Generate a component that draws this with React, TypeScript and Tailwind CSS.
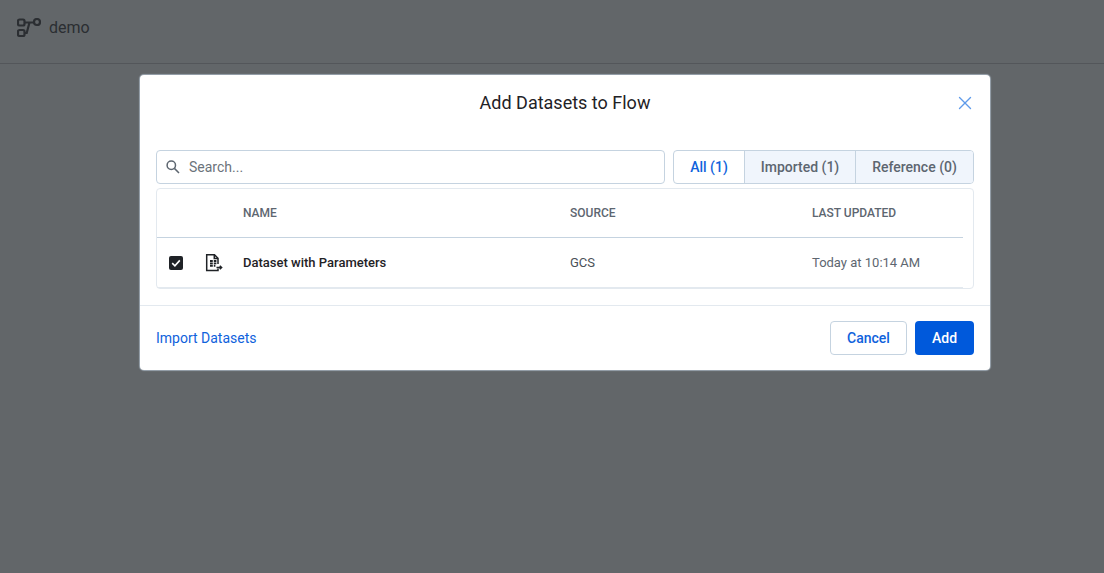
import { X } from "lucide-react";

const FlowIcon = () => (
  <svg width="24" height="20" viewBox="0 0 24 20" fill="none" stroke="#2b2e32" strokeWidth="2.2">
    <rect x="1" y="1.5" width="6.5" height="6" rx="1.5" />
    <rect x="1" y="12" width="6.5" height="6" rx="1.5" />
    <circle cx="20" cy="4" r="3" />
    <path d="M7.5 4.5H17M12.5 4.5 9.7 15H7.5" />
  </svg>
);

const SearchGlyph = () => (
  <svg width="14" height="14" viewBox="0 0 14 14" fill="none" stroke="#5d6670" strokeWidth="1.5">
    <circle cx="5.3" cy="5.3" r="4.2" />
    <path d="M8.4 8.4 13 13" />
  </svg>
);

const DatasetIcon = () => (
  <svg width="18" height="18" viewBox="0 0 18 18" fill="none" stroke="#1f2226" strokeWidth="1.5">
    <path d="M13 14.5v2H1.7V.7h7.7l3.6 3.6V10" />
    <path d="M9.3 1v3.6h3.6" />
    <path d="M5 7h2.8M5 9.4h2.8M5 11.8h2.8M8.8 7h2.6M8.8 9.4h2.6M8.8 11.8h1.6" strokeWidth="1.9" />
    <path d="M11.5 13.5h5M14.8 11.7l1.9 1.8-1.9 1.8" strokeWidth="1.4" />
  </svg>
);

const App = () => {
  return (
    <div className="h-[573px] w-[1104px] overflow-hidden bg-[#626669] font-['Roboto',sans-serif]">
      <div className="flex h-[64px] items-center gap-[8px] border-b border-[#53565a] pb-[7px] pl-[17px]">
        <FlowIcon />
        <span className="text-[16px] text-[#2b2e32]">demo</span>
      </div>

      <div className="ml-[140px] mt-[11px] w-[850px] rounded-[4px] bg-white shadow-[0_0_1px_1px_rgba(190,205,220,0.6)]">
        <div className="relative flex h-[75px] items-start justify-center pt-[16px]">
          <h2 className="text-[18px] leading-[24px] text-[#1f2226]">Add Datasets to Flow</h2>
          <X className="absolute right-[14px] top-[17px] text-[#5f9bea]" size={22} strokeWidth={1.5} />
        </div>

        <div className="flex gap-[8px] px-[16px]">
          <div className="flex h-[34px] w-[509px] items-center gap-[9px] rounded-[4px] border border-[#c5d3e0] pl-[9px]">
            <SearchGlyph />
            <span className="text-[14px] text-[#6b737b]">Search...</span>
          </div>
          <div className="flex h-[34px] w-[301px] overflow-hidden rounded-[4px] border border-[#c5d3e0] text-[14px] font-medium">
            <div className="flex w-[71px] items-center justify-center border-r border-[#c5d3e0] text-[#0f62dc]">All (1)</div>
            <div className="flex w-[111px] items-center justify-center border-r border-[#c5d3e0] bg-[#f0f5fc] text-[#5d6670]">Imported (1)</div>
            <div className="flex flex-1 items-center justify-center bg-[#f0f5fc] text-[#5d6670]">Reference (0)</div>
          </div>
        </div>

        <div className="mx-[16px] mt-[4px] h-[101px] rounded-[4px] border border-[#e3e9ef]">
          <div className="mr-[10px] flex h-[49px] items-center border-b border-[#c5d3e0] text-[12px] font-medium text-[#5d6670]">
            <div className="w-[86px]" />
            <div className="w-[327px]">NAME</div>
            <div className="w-[242px]">SOURCE</div>
            <div>LAST UPDATED</div>
          </div>
          <div className="mr-[10px] flex h-[50px] items-center border-b border-[#e3e9ef] text-[13px]">
            <div className="flex w-[86px] items-center pl-[12px]">
              <div className="flex h-[14px] w-[14px] items-center justify-center rounded-[2px] bg-[#1f2226]">
                <svg width="10" height="10" viewBox="0 0 10 10" fill="none" stroke="white" strokeWidth="1.6">
                  <path d="M1.2 5.2 3.9 7.8 8.8 2.4" />
                </svg>
              </div>
              <div className="ml-[22px]">
                <DatasetIcon />
              </div>
            </div>
            <div className="w-[327px] font-medium text-[#1f2226]">Dataset with Parameters</div>
            <div className="w-[242px] text-[#4a5158]">GCS</div>
            <div className="text-[#5d6670]">Today at 10:14 AM</div>
          </div>
        </div>

        <div className="mt-[16px] flex h-[65px] items-center justify-between border-t border-[#e3e9ef] px-[16px] pb-[1px]">
          <span className="pt-[2px] text-[14px] text-[#0f62dc]">Import Datasets</span>
          <div className="flex gap-[8px]">
            <button type="button" className="h-[34px] w-[77px] rounded-[4px] border border-[#c5d3e0] pt-[1px] text-[14px] font-medium text-[#0f62dc]">
              Cancel
            </button>
            <button type="button" className="h-[34px] w-[59px] rounded-[4px] bg-[#0059db] pt-[1px] text-[14px] font-medium text-white">
              Add
            </button>
          </div>
        </div>
      </div>
    </div>
  );
};

export default App;
